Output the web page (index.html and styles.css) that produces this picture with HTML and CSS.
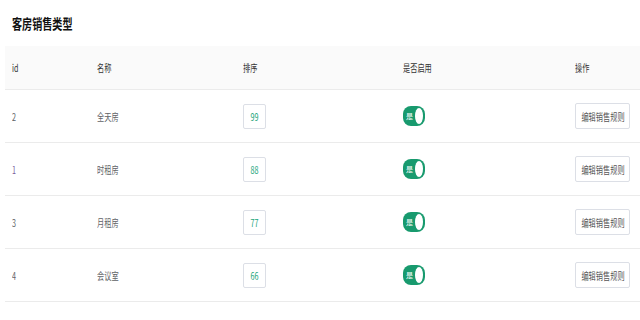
FILE: index.html
```html
<!DOCTYPE html>
<html lang="zh">
<head>
<meta charset="utf-8">
<link rel="stylesheet" href="styles.css">
</head>
<body>
<div class="page">
  <h1 class="title"><span class="sq">客房销售类型</span></h1>
  <div class="table">
    <div class="row head">
      <div class="cell"><span class="sq">id</span></div>
      <div class="cell"><span class="sq">名称</span></div>
      <div class="cell"><span class="sq">排序</span></div>
      <div class="cell"><span class="sq">是否启用</span></div>
      <div class="cell"><span class="sq">操作</span></div>
    </div>
    <div class="row">
      <div class="cell"><span class="sq">2</span></div>
      <div class="cell"><span class="sq">全天房</span></div>
      <div class="cell"><div class="num"><span class="sqc">99</span></div></div>
      <div class="cell"><div class="toggle"><span class="tlabel">是</span><span class="knob"></span></div></div>
      <div class="cell"><div class="btn"><span class="sqc">编辑销售规则</span></div></div>
    </div>
    <div class="row">
      <div class="cell"><span class="sq id">1</span></div>
      <div class="cell"><span class="sq">时租房</span></div>
      <div class="cell"><div class="num"><span class="sqc">88</span></div></div>
      <div class="cell"><div class="toggle"><span class="tlabel">是</span><span class="knob"></span></div></div>
      <div class="cell"><div class="btn"><span class="sqc">编辑销售规则</span></div></div>
    </div>
    <div class="row">
      <div class="cell"><span class="sq">3</span></div>
      <div class="cell"><span class="sq">月租房</span></div>
      <div class="cell"><div class="num"><span class="sqc">77</span></div></div>
      <div class="cell"><div class="toggle"><span class="tlabel">是</span><span class="knob"></span></div></div>
      <div class="cell"><div class="btn"><span class="sqc">编辑销售规则</span></div></div>
    </div>
    <div class="row">
      <div class="cell"><span class="sq">4</span></div>
      <div class="cell"><span class="sq">会议室</span></div>
      <div class="cell"><div class="num"><span class="sqc">66</span></div></div>
      <div class="cell"><div class="toggle"><span class="tlabel">是</span><span class="knob"></span></div></div>
      <div class="cell"><div class="btn"><span class="sqc">编辑销售规则</span></div></div>
    </div>
  </div>
</div>
</body>
</html>
```

FILE: styles.css
```css
html, body {
  margin: 0;
  padding: 0;
  background: #ffffff;
}
body {
  font-family: "Noto Sans CJK SC", "Noto Sans", sans-serif;
  color: #606266;
  font-size: 10px;
}
.page {
  padding: 0 0 0 5px;
}
.title {
  margin: 0;
  height: 46px;
  display: flex;
  align-items: center;
  padding-left: 7px;
  font-size: 14px;
  font-weight: 700;
  color: #111;
}
.sq {
  display: inline-block;
  transform: scaleX(0.72);
  transform-origin: left center;
  white-space: nowrap;
}
.sqc {
  display: inline-block;
  transform: scaleX(0.72);
  transform-origin: center center;
  white-space: nowrap;
}
.table {
  width: 635px;
}
.row {
  display: grid;
  grid-template-columns: 85px 146px 160px 172px 1fr;
  height: 53px;
  border-bottom: 1px solid #ebebeb;
  box-sizing: border-box;
}
.row.head {
  height: 44px;
  background: #fafafa;
  color: #333;
  border-bottom: 1px solid #ebebeb;
}
.cell {
  display: flex;
  align-items: center;
  padding-left: 7px;
  overflow: visible;
}
.id {
  color: #7a5c9c;
}
.num {
  width: 23px;
  height: 25px;
  box-sizing: border-box;
  border: 1px solid #dcdfe6;
  border-radius: 2px;
  display: flex;
  align-items: center;
  justify-content: center;
  color: #1ba57a;
  font-size: 10px;
}
.toggle {
  width: 22px;
  height: 20px;
  border-radius: 8px;
  background: #189a6e;
  display: flex;
  align-items: center;
  justify-content: space-between;
  padding: 0 2px 0 3px;
  box-sizing: border-box;
}
.tlabel {
  color: #fff;
  font-size: 7px;
  line-height: 1;
}
.knob {
  width: 8px;
  height: 16px;
  border-radius: 50%;
  background: #fff;
}
.btn {
  width: 55px;
  height: 26px;
  box-sizing: border-box;
  border: 1px solid #dcdfe6;
  border-radius: 2px;
  display: flex;
  align-items: center;
  justify-content: center;
  color: #555;
  font-size: 10px;
  background: #fff;
}
```
